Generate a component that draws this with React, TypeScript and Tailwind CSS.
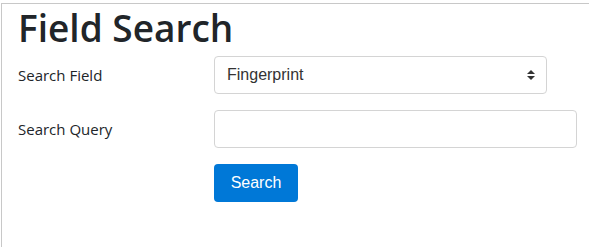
export default function App() {
	return (
		<div className="w-[589px] h-[247px] bg-white overflow-hidden">
			<div className="ml-[1px] mt-[3px] h-[300px] border-l border-t border-[#c8c8c8] pl-[16px] text-[#212529] font-['Open_Sans',sans-serif]">
				<h1 className="text-[37px] font-semibold leading-[48px]">Field Search</h1>
				<form
					className="mt-[4px] grid grid-cols-[196px_auto] gap-y-[16px] items-center"
					onSubmit={(e) => e.preventDefault()}
				>
					<label className="text-[15px] leading-[20px]">Search Field</label>
					<div className="relative w-[333px] h-[38px]">
						<select
							className="appearance-none w-full h-full rounded-[4px] border border-[#d4d4d4] bg-white pl-[12px] text-[16px] text-[#333] font-['Liberation_Sans',Arial,sans-serif]"
							defaultValue="Fingerprint"
						>
							<option>Fingerprint</option>
						</select>
						<svg
							className="absolute right-[12px] top-[13px] pointer-events-none"
							width="8"
							height="12"
							viewBox="0 0 8 12"
						>
							<path d="M0 5 L4 1 L8 5 Z" fill="#333" />
							<path d="M0 7 L4 11 L8 7 Z" fill="#333" />
						</svg>
					</div>
					<label className="text-[15px] leading-[20px]">Search Query</label>
					<input
						type="text"
						className="w-[363px] h-[38px] rounded-[4px] border border-[#d4d4d4] bg-white px-[12px] text-[16px] font-['Liberation_Sans',Arial,sans-serif]"
					/>
					<div />
					<div>
						<button
							type="submit"
							className="w-[84px] h-[38px] rounded-[4px] bg-[#0078d7] text-white text-[16px] font-['Liberation_Sans',Arial,sans-serif]"
						>
							Search
						</button>
					</div>
				</form>
			</div>
		</div>
	);
}
